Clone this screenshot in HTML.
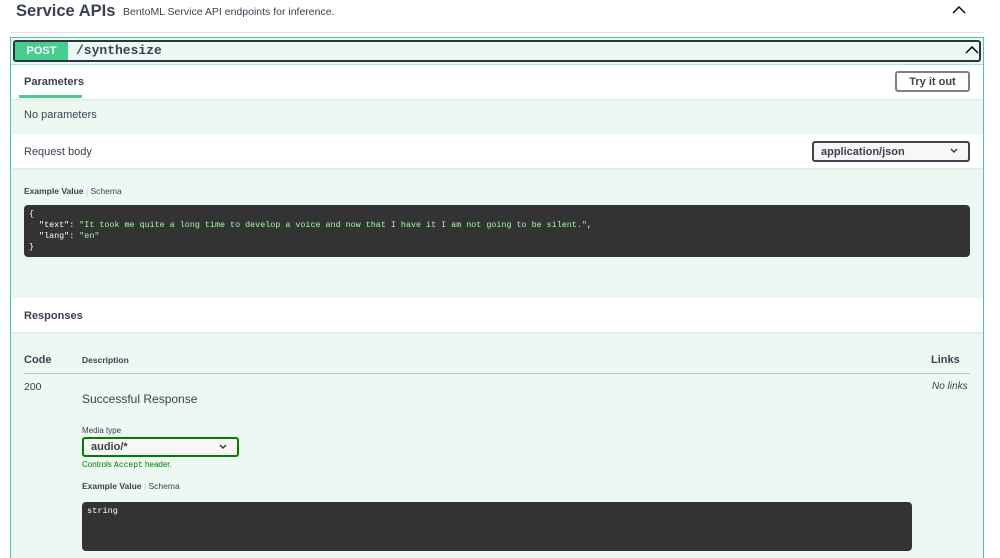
<!DOCTYPE html>
<html><head><style>
*{box-sizing:border-box;margin:0;padding:0}
html{overflow:hidden;height:558px}
body{width:1000px;height:558px;overflow:hidden;background:#fff;font-family:"Liberation Sans",sans-serif;color:#3b4151;position:relative}
.a{position:absolute}
.mono{font-family:"Liberation Mono",monospace}
</style></head><body>
<div class="a" style="left:16px;top:1px;font-size:16.5px;font-weight:bold;line-height:20px">Service APIs</div>
<div class="a" style="left:123px;top:5px;font-size:10.5px;line-height:14px">BentoML Service API endpoints for inference.</div>
<svg class="a" style="left:951px;top:4px" width="16" height="12"><path d="M2 9 L8 3 L14 9" fill="none" stroke="#000" stroke-width="1.4"/></svg>
<div class="a" style="left:10px;top:32px;width:974px;height:1px;background:#e2e2e2"></div>
<div class="a" style="left:10px;top:37px;width:974px;height:540px;border:1px solid #49cc90;background:#edf8f2"></div>
<div class="a" style="left:13px;top:40px;width:968px;height:22px;border:2px solid #2d3340;border-radius:3px;background:#edf8f2"></div>
<div class="a" style="left:15px;top:42px;width:53px;height:18px;background:#49cc90;color:#fff;font-weight:bold;font-size:11px;line-height:18px;text-align:center">POST</div>
<div class="a mono" style="left:76px;top:43px;font-size:13px;font-weight:bold;line-height:16px">/synthesize</div>
<svg class="a" style="left:964px;top:43px" width="16" height="14"><path d="M2 10 L8 4 L14 10" fill="none" stroke="#000" stroke-width="1.5"/></svg>
<div class="a" style="left:11px;top:64px;width:972px;height:1px;background:#aee6c9"></div>
<div class="a" style="left:11px;top:65px;width:972px;height:34px;background:#fff;box-shadow:0 1px 2px rgba(0,0,0,.08)"></div>
<div class="a" style="left:24px;top:76px;font-size:11px;font-weight:bold">Parameters</div>
<div class="a" style="left:19px;top:95px;width:63px;height:3px;background:#49cc90"></div>
<div class="a" style="left:895px;top:71px;width:75px;height:21px;border:2px solid #808080;border-radius:3px;font-size:11px;font-weight:bold;text-align:center;line-height:18px;background:#fff">Try it out</div>
<div class="a" style="left:24px;top:109px;font-size:11px">No parameters</div>
<div class="a" style="left:11px;top:134px;width:972px;height:34px;background:#fff;box-shadow:0 1px 2px rgba(0,0,0,.08)"></div>
<div class="a" style="left:24px;top:146px;font-size:11px">Request body</div>
<div class="a" style="left:812px;top:141px;width:158px;height:21px;border:2px solid #41444e;border-radius:3px;background:#f7f7f7;font-size:11px;font-weight:bold;line-height:18px;padding-left:7px">application/json</div>
<svg class="a" style="left:949px;top:147px" width="10" height="8"><path d="M2 2 L5 5 L8 2" fill="none" stroke="#333" stroke-width="1.4"/></svg>
<div class="a" style="left:24px;top:186px;font-size:8.5px"><b>Example Value</b> <span style="color:#ccc">|</span> Schema</div>
<div class="a mono" style="left:24px;top:205px;width:946px;height:52px;background:#333;border-radius:4px;color:#fff;font-size:8.4px;line-height:11px;padding:4px 5px;white-space:pre">{
  "text": <span style="color:#a2fca2">"It took me quite a long time to develop a voice and now that I have it I am not going to be silent."</span>,
  "lang": <span style="color:#a2fca2">"en"</span>
}</div>
<div class="a" style="left:11px;top:298px;width:972px;height:34px;background:#fff;box-shadow:0 1px 2px rgba(0,0,0,.08)"></div>
<div class="a" style="left:24px;top:310px;font-size:11px;font-weight:bold">Responses</div>
<div class="a" style="left:24px;top:354px;font-size:11px;font-weight:bold">Code</div>
<div class="a" style="left:82px;top:355px;font-size:8.5px;font-weight:bold">Description</div>
<div class="a" style="left:931px;top:354px;font-size:11px;font-weight:bold">Links</div>
<div class="a" style="left:24px;top:373px;width:946px;height:1px;background:#bcc4c0"></div>
<div class="a" style="left:24px;top:381px;font-size:10.5px">200</div>
<div class="a" style="left:932px;top:381px;font-size:10px;font-style:italic">No links</div>
<div class="a" style="left:82px;top:392px;font-size:12px">Successful Response</div>
<div class="a" style="left:82px;top:426px;font-size:8px">Media type</div>
<div class="a" style="left:82px;top:437px;width:157px;height:20px;border:2px solid #008000;border-radius:3px;background:#f7f7f7;font-size:11px;font-weight:bold;line-height:16px;padding-left:7px">audio/*</div>
<svg class="a" style="left:218px;top:443px" width="10" height="8"><path d="M2 2 L5 5 L8 2" fill="none" stroke="#333" stroke-width="1.4"/></svg>
<div class="a" style="left:82px;top:460px;font-size:8px;color:#008000">Controls <span class="mono">Accept</span> header.</div>
<div class="a" style="left:82px;top:481px;font-size:8.5px"><b>Example Value</b> <span style="color:#ccc">|</span> Schema</div>
<div class="a mono" style="left:82px;top:502px;width:830px;height:49px;background:#333;border-radius:4px;color:#fff;font-size:8.6px;line-height:11px;padding:4px 5px">string</div>
</body></html>
